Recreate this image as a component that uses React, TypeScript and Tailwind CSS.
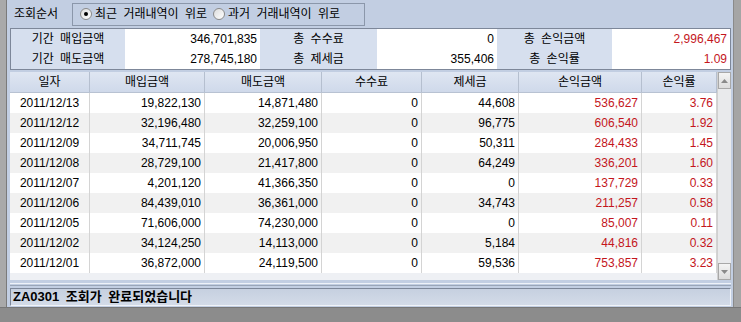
import React from 'react';

const rows = [
  ['2011/12/13', '19,822,130', '14,871,480', '0', '44,608', '536,627', '3.76'],
  ['2011/12/12', '32,196,480', '32,259,100', '0', '96,775', '606,540', '1.92'],
  ['2011/12/09', '34,711,745', '20,006,950', '0', '50,311', '284,433', '1.45'],
  ['2011/12/08', '28,729,100', '21,417,800', '0', '64,249', '336,201', '1.60'],
  ['2011/12/07', '4,201,120', '41,366,350', '0', '0', '137,729', '0.33'],
  ['2011/12/06', '84,439,010', '36,361,000', '0', '34,743', '211,257', '0.58'],
  ['2011/12/05', '71,606,000', '74,230,000', '0', '0', '85,007', '0.11'],
  ['2011/12/02', '34,124,250', '14,113,000', '0', '5,184', '44,816', '0.32'],
  ['2011/12/01', '36,872,000', '24,119,500', '0', '59,536', '753,857', '3.23'],
];

const headers = ['일자', '매입금액', '매도금액', '수수료', '제세금', '손익금액', '손익률'];

const font = { fontFamily: '"Liberation Sans", "Noto Sans CJK KR", sans-serif' };

const Radio = ({ checked, label }: { checked?: boolean; label: string }) => (
  <div className="flex items-center gap-[3px]">
    <span className="w-[12px] h-[12px] rounded-full border border-[#8a8a8a] bg-gradient-to-br from-[#dcdcdc] to-white flex items-center justify-center">
      {checked && <span className="w-[4px] h-[4px] rounded-full bg-black" />}
    </span>
    <span>{label}</span>
  </div>
);

const SummaryLabel = ({ children, w }: { children: React.ReactNode; w: string }) => (
  <div className={`${w} h-[20px] bg-[#d6dfee] flex items-center justify-center`}>{children}</div>
);

const SummaryValue = ({ children, w, red }: { children: React.ReactNode; w: string; red?: boolean }) => (
  <div className={`${w} h-[20px] bg-white flex items-center justify-end pr-[3px] ${red ? 'text-[#c4161c]' : ''}`}>
    {children}
  </div>
);

const colW = ['w-[80px]', 'w-[115px]', 'w-[117px]', 'w-[100px]', 'w-[97px]', 'w-[123px]', 'w-[75px]'];

export default function App() {
  return (
    <div
      className="w-[741px] h-[322px] bg-[#8e8e8e] flex flex-col text-[12px] text-black overflow-hidden [word-spacing:3px]"
      style={font}
    >
      <div className="flex h-[307px]">
        <div className="w-[7px] bg-[#a9a9a9] border-r border-[#7a7a7a]" />
        <div className="flex-1 bg-[#c2cee2] pl-[3px] pr-[2px] flex flex-col">
          {/* order selector */}
          <div className="h-[28px] flex items-center">
            <span className="ml-[4px] w-[58px]">조회순서</span>
            <div className="h-[23px] w-[293px] border border-[#8b97aa] flex items-center gap-[6px] pl-[7px]">
              <Radio checked label="최근 거래내역이 위로" />
              <Radio label="과거 거래내역이 위로" />
            </div>
          </div>

          {/* summary */}
          <div className="border border-[#7d8799] flex flex-col">
            <div className="flex">
              <SummaryLabel w="w-[114px]">기간 매입금액</SummaryLabel>
              <SummaryValue w="w-[135px]">346,701,835</SummaryValue>
              <SummaryLabel w="w-[117px]">총 수수료</SummaryLabel>
              <SummaryValue w="w-[120px]">0</SummaryValue>
              <SummaryLabel w="w-[115px]">총 손익금액</SummaryLabel>
              <SummaryValue w="flex-1" red>2,996,467</SummaryValue>
            </div>
            <div className="flex">
              <SummaryLabel w="w-[114px]">기간 매도금액</SummaryLabel>
              <SummaryValue w="w-[135px]">278,745,180</SummaryValue>
              <SummaryLabel w="w-[117px]">총 제세금</SummaryLabel>
              <SummaryValue w="w-[120px]">355,406</SummaryValue>
              <SummaryLabel w="w-[115px]">총 손익률</SummaryLabel>
              <SummaryValue w="flex-1" red>1.09</SummaryValue>
            </div>
          </div>

          {/* grid */}
          <div className="mt-[2px] h-[208px] flex bg-[#eef0f4]">
            <div className="flex flex-col">
              <div className="flex h-[21px] bg-gradient-to-b from-[#dfe6f2] to-[#cfd9ea] border-b border-[#b8c2d2]">
                {headers.map((h, i) => (
                  <div key={h} className={`${colW[i]} flex items-center justify-center border-r border-[#b5bfcf]`}>
                    {h}
                  </div>
                ))}
              </div>
              {rows.map((r, ri) => (
                <div key={r[0]} className={`flex h-[20px] ${ri % 2 ? 'bg-[#f1f1f1]' : 'bg-white'}`}>
                  {r.map((c, ci) => (
                    <div
                      key={ci}
                      className={`${colW[ci]} flex items-center border-r border-[#d4d4d4] ${
                        ci === 0 ? 'justify-center' : 'justify-end pr-[3px]'
                      } ${ci >= 5 ? 'text-[#c4161c]' : ''}`}
                    >
                      {c}
                    </div>
                  ))}
                </div>
              ))}
            </div>
            <div className="flex-1 bg-[#e9eaec] border-l border-[#d0d0d0] flex flex-col justify-between">
              <div className="h-[17px] bg-gradient-to-b from-[#f4f4f4] to-[#dcdcdc] border border-[#a8a8a8] flex items-center justify-center">
                <svg width="7" height="4" viewBox="0 0 7 4"><path d="M0 4 L3.5 0 L7 4 Z" fill="#8a8a8a" /></svg>
              </div>
              <div className="h-[17px] bg-gradient-to-b from-[#f4f4f4] to-[#dcdcdc] border border-[#a8a8a8] flex items-center justify-center">
                <svg width="7" height="4" viewBox="0 0 7 4"><path d="M0 0 L7 0 L3.5 4 Z" fill="#8a8a8a" /></svg>
              </div>
            </div>
          </div>

          {/* separator */}
          <div className="mt-[3px] h-[3px] border-t border-[#eef2f8] border-b border-b-[#9aa6b8]" />

          {/* status */}
          <div className="mt-[2px] h-[18px] border border-[#7d8799] border-r-[#f0f3f8] border-b-[#f0f3f8] bg-gradient-to-b from-[#c6d0e0] to-[#d3dbe8] flex items-center pl-[2px]">
            <span className="font-bold text-[13px]">ZA0301 조회가 완료되었습니다</span>
          </div>
        </div>
        <div className="w-[8px] bg-[#a5a5a5] border-l border-[#8a8a8a]" />
      </div>
      <div className="flex-1 bg-[#8c8c8c] border-t border-[#777]" />
    </div>
  );
}
